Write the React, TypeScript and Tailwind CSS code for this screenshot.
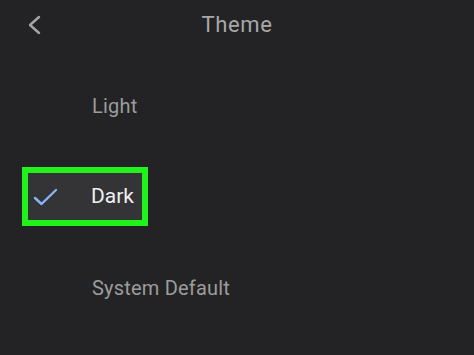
export default function App() {
  const rows = ["Light", "Dark", "System Default"];

  return (
    <div className="w-[474px] h-[355px] overflow-hidden bg-[#232325] font-['Roboto','Liberation_Sans',sans-serif]">
      {/* header */}
      <div className="relative h-12 flex items-center justify-center">
        <button className="absolute left-[26px] top-[15px] text-[#a4a4a4]">
          <svg width="18" height="20" viewBox="0 0 18 20" fill="none">
            <path d="M13 2 L4 10 L13 18" stroke="currentColor" strokeWidth="2.4" strokeLinecap="round" strokeLinejoin="round" />
          </svg>
        </button>
        <h1 className="text-[22px] text-[#a8a8a8] tracking-[0.6px] mt-[1px]">Theme</h1>
      </div>

      {/* options */}
      <div className="mt-3 flex flex-col">
        {rows.map((label) =>
          label === "Dark" ? (
            <div key={label} className="h-[91px] flex items-center pl-[22px]">
              <div className="w-[126px] h-[59px] border-[6px] border-[#22f21c] bg-[#343437] flex items-center pl-[5px]">
                <svg width="25" height="18" viewBox="0 0 25 18" fill="none" className="mt-[1px]">
                  <path d="M2 10 L8.5 16 L23 2" stroke="#8ab4f8" strokeWidth="2.4" strokeLinecap="round" strokeLinejoin="round" />
                </svg>
                <span className="ml-[33px] text-[21px] text-[#f0f0f0]">Dark</span>
              </div>
            </div>
          ) : (
            <div key={label} className="h-[91px] flex items-center pl-[92px]">
              <span className="text-[20px] text-[#9c9c9c] tracking-[0.2px]">{label}</span>
            </div>
          )
        )}
      </div>
    </div>
  );
}
